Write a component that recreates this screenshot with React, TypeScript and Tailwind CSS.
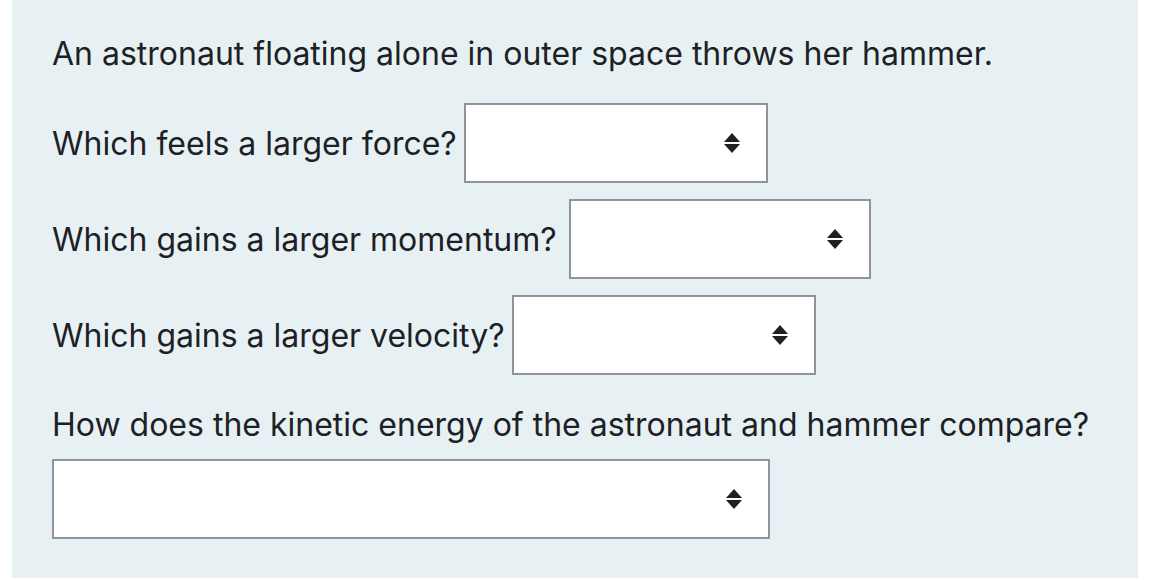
function Arrows() {
  return (
    <svg width="16" height="20" viewBox="0 0 16 20" className="shrink-0">
      <polygon points="0,9 8,0 16,9" fill="#1d2125" />
      <polygon points="0,11 16,11 8,20" fill="#1d2125" />
    </svg>
  );
}

function Dropdown({ width }: { width: string }) {
  return (
    <div
      className={`${width} h-[80px] shrink-0 bg-white border-2 border-[#8f959e] flex items-center justify-end pr-[26px]`}
    >
      <Arrows />
    </div>
  );
}

const rows = [
  { label: "Which feels a larger force?", lw: "w-[404px]", w: "w-[304px]" },
  { label: "Which gains a larger momentum?", lw: "w-[509px]", w: "w-[302px]" },
  { label: "Which gains a larger velocity?", lw: "w-[452px]", w: "w-[304px]" },
];

export default function App() {
  return (
    <div className="w-[1152px] h-[580px] bg-white pl-[12px] pr-[14px] font-['Inter',sans-serif] text-[#1d2125]">
      <div className="h-[578px] bg-[#e7f1f4] px-10 pt-[31px] text-[32px] leading-[45px] whitespace-nowrap">
        <p>An astronaut floating alone in outer space throws her hammer.</p>
        <div className="mt-[27px] flex flex-col gap-4">
          {rows.map((r) => (
            <div key={r.label} className="flex items-center gap-2">
              <span className={`${r.lw} shrink-0`}>{r.label}</span>
              <Dropdown width={r.w} />
            </div>
          ))}
        </div>
        <p className="mt-[27px]">
          How does the kinetic energy of the astronaut and hammer compare?
        </p>
        <div className="mt-[12px]">
          <Dropdown width="w-[718px]" />
        </div>
      </div>
    </div>
  );
}
